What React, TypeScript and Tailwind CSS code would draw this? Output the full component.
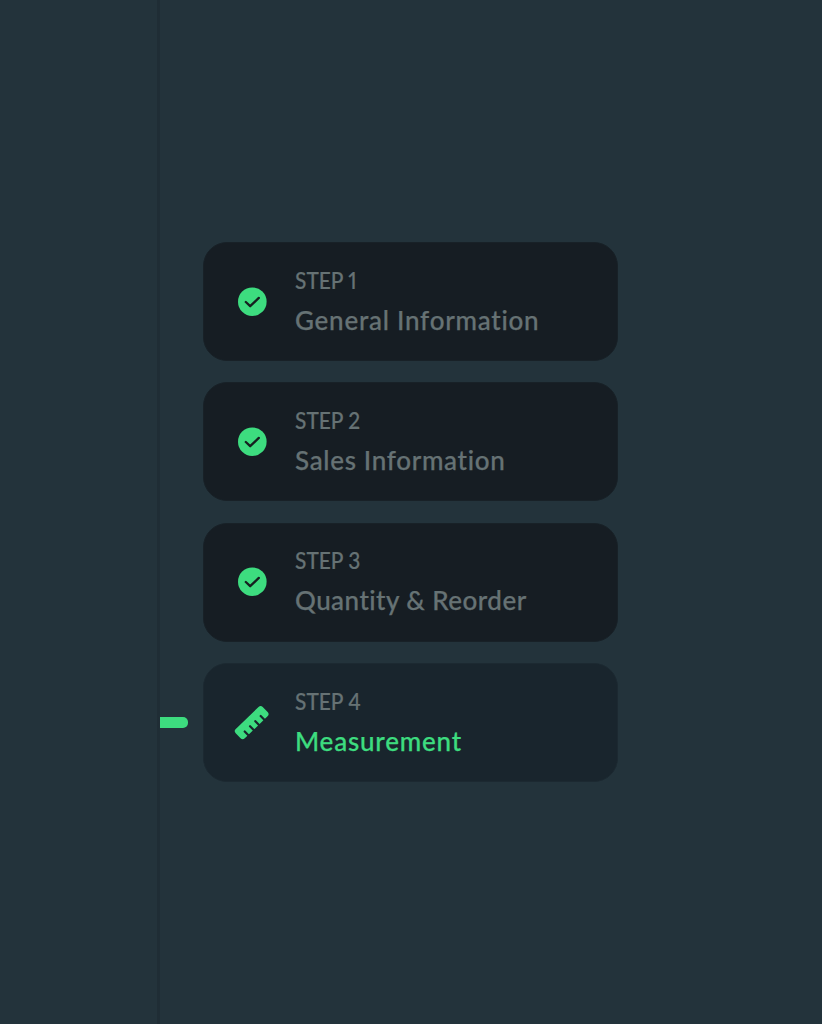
import React, { FC } from 'react'
import clsx from 'clsx'

interface Step {
  label: string
  title: string
  active?: boolean
  titleClass: string
}

const steps: Step[] = [
  { label: 'STEP 1', title: 'General Information', titleClass: 'tracking-[0.76px]' },
  { label: 'STEP 2', title: 'Sales Information', titleClass: 'tracking-[0.68px]' },
  { label: 'STEP 3', title: 'Quantity & Reorder', titleClass: 'tracking-[0.46px]' },
  { label: 'STEP 4', title: 'Measurement', titleClass: 'tracking-[0.78px]', active: true },
]

const CheckIcon: FC = () => (
  <svg className="size-[30px]" viewBox="0 0 30 30" fill="none" aria-hidden="true">
    <circle cx="15.3" cy="14.7" r="14.3" fill="#3ddc7f" />
    <path
      d="M8.8 15l4.4 4.2 8.6-8.3"
      stroke="#15201f"
      strokeWidth="2.3"
      strokeLinecap="round"
      strokeLinejoin="round"
    />
  </svg>
)

const RulerIcon: FC = () => (
  <svg className="size-9" viewBox="0 0 36 36" fill="none" aria-hidden="true">
    <g transform="rotate(-44 18 18)">
      <rect x="-0.8" y="11" width="37.6" height="13" rx="3" fill="#3ddc7f" />
      <path
        d="M6.9 25v-6M14.3 25v-6M21.7 25v-6M29.1 25v-6"
        stroke="#19252d"
        strokeWidth="2.2"
        strokeLinecap="round"
      />
    </g>
  </svg>
)

const StepCard: FC<{ step: Step }> = ({ step }) => (
  <li
    className={clsx(
      'flex h-[119px] items-center rounded-[24px] border',
      step.active ? 'border-[#1c2931] bg-[#19252d]' : 'border-[#182127] bg-[#161d23]',
    )}
  >
    <div className="ml-[30px] flex w-9 justify-center">
      {step.active ? <RulerIcon /> : <CheckIcon />}
    </div>
    <div className="ml-[25px] pt-[3px] font-medium whitespace-nowrap">
      <p className="origin-left scale-x-93 text-[22.5px] leading-[34px] text-[#667274] proportional-nums [-webkit-text-stroke:0.2px_currentColor]">
        {step.label}
      </p>
      <p
        className={clsx(
          'text-[26px] leading-[45px] [-webkit-text-stroke:0.25px_currentColor]',
          step.titleClass,
          step.active ? 'text-[#3ddc7f]' : 'text-[#667274]',
        )}
      >
        {step.title}
      </p>
    </div>
  </li>
)

export default function App() {
  return (
    <div className="flex h-screen overflow-hidden bg-[#23333b] font-['Lato',sans-serif]">
      <div className="w-[160px] border-r-3 border-[#1f2d35]" />
      <div className="flex w-[43px] flex-col">
        <div className="mt-[717px] h-[11px] w-7 rounded-r-[5px] bg-[#3ddc7f]" />
      </div>
      <ol className="mt-[242px] flex w-[415px] flex-col gap-[21.4px]">
        {steps.map((step) => (
          <StepCard key={step.label} step={step} />
        ))}
      </ol>
    </div>
  )
}
